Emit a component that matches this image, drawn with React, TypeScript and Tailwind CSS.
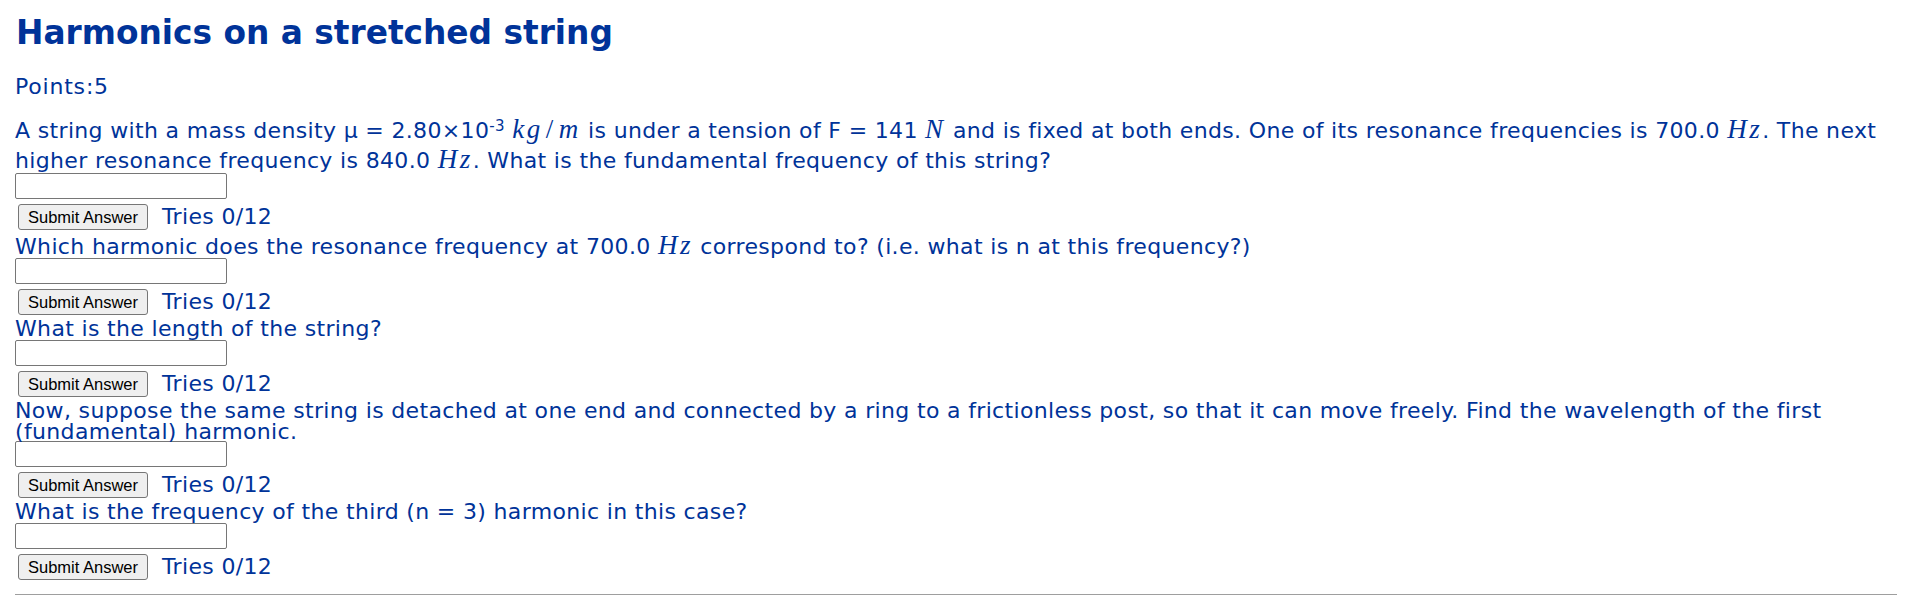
import type { ReactNode } from "react";

function M({ children }: { children: ReactNode }) {
  return (
    <span className="font-['Liberation_Serif',serif] italic text-[27px] leading-[18px] tracking-[2.5px]">
      {children}
    </span>
  );
}

function AnswerBox({ first, tight }: { first?: boolean; tight?: boolean }) {
  return (
    <>
      <input
        type="text"
        className={
          "block w-[212px] h-[26px] border border-[#767676] rounded-[2px] bg-white " +
          (first ? "mt-[-3px]" : tight ? "mt-[-1px]" : "")
        }
      />
      <div className="flex items-center mt-[5px] h-[26px]">
        <button className="ml-[3px] w-[130px] h-[26px] bg-[#efefef] border border-[#767676] rounded-[3px] text-black font-['Liberation_Sans',Arial,sans-serif] text-[16.5px] leading-none tracking-normal">
          Submit Answer
        </button>
        <span className="ml-[14px]">Tries 0/12</span>
      </div>
    </>
  );
}

export default function App() {
  return (
    <div className="min-h-screen bg-white px-[15px] pt-[13px] text-[#003399] font-['DejaVu_Sans',Verdana,sans-serif] text-[22px] leading-[22px] tracking-[0.34px]">
      <h1 className="text-[32.8px] font-bold leading-[40px] pl-[1px] tracking-normal">
        Harmonics on a stretched string
      </h1>
      <div className="mt-[23px] tracking-[0.8px]">Points:5</div>

      <p className="mt-[18px] leading-[30px]">
        A string with a mass density µ = 2.80×10
        <sup className="text-[15px] -top-[7px]">-3</sup>{" "}
        <M>
          kg<span className="not-italic px-[3px]">/</span>m
        </M>{" "}
        is under a tension of F = 141 <M>N</M> and is fixed at both ends. One of
        its resonance frequencies is 700.0 <M>Hz</M>. The next higher resonance
        frequency is 840.0 <M>Hz</M>. What is the fundamental frequency of this
        string?
      </p>
      <AnswerBox first />

      <div className="mt-[6px]">
        Which harmonic does the resonance frequency at 700.0 <M>Hz</M> correspond
        to? (i.e. what is n at this frequency?)
      </div>
      <AnswerBox />

      <div className="mt-[3px]">What is the length of the string?</div>
      <AnswerBox />

      <div className="mt-[3px] leading-[21px]">
        Now, suppose the same string is detached at one end and connected by a
        ring to a frictionless post, so that it can move freely. Find the
        wavelength of the first (fundamental) harmonic.
      </div>
      <AnswerBox tight />

      <div className="mt-[3px]">
        What is the frequency of the third (n = 3) harmonic in this case?
      </div>
      <AnswerBox />

      <hr className="mt-[14px] border-t border-[#9e9e9e]" />
    </div>
  );
}
